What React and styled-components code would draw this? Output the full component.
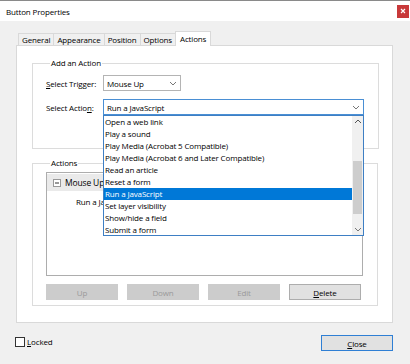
import React from 'react';
import styled, { createGlobalStyle } from 'styled-components';

const GlobalStyle = createGlobalStyle`
  html, body { margin: 0; padding: 0; }
  body {
    font-family: "Open Sans", "Noto Sans", sans-serif;
    font-size: 8px;
    letter-spacing: -0.15px;
    color: #000;
  }
`;

const Window = styled.div`
  width: 410px;
  height: 364px;
  display: flex;
  flex-direction: column;
  background: #f0f0f0;
  overflow: hidden;
  position: relative;
`;

const TitleBar = styled.div`
  height: 21px;
  background: #fff;
  border-top: 1px solid #8a8a8a;
  display: flex;
  align-items: center;
  justify-content: space-between;
  padding-left: 6px;
  padding-right: 1px;
  box-sizing: border-box;
`;

const CloseX = styled.div`
  flex-shrink: 0;
  width: 12px;
  height: 13px;
  background: #c8393a;
  display: flex;
  align-items: center;
  justify-content: center;
`;

const Body = styled.div`
  flex: 1;
  padding: 10px 17px 0 16px;
  display: flex;
  flex-direction: column;
`;

const TabStrip = styled.div`
  display: flex;
  align-items: flex-end;
  padding-left: 2px;
  height: 14px;
`;

const Tab = styled.div`
  height: ${p => (p.$active ? '15px' : '12px')};
  padding: 0 ${p => (p.$active ? '4px' : '3px')};
  background: ${p => (p.$active ? '#fff' : '#f0f0f0')};
  border: 1px solid #d9d9d9;
  border-bottom: none;
  margin-left: ${p => (p.$first ? '0' : '-1px')};
  display: flex;
  align-items: ${p => (p.$active ? 'flex-start' : 'center')};
  padding-top: ${p => (p.$active ? '1px' : '0')};
  box-sizing: border-box;
  position: relative;
  z-index: ${p => (p.$active ? 2 : 1)};
  margin-bottom: ${p => (p.$active ? '-1px' : '0')};
`;

const Panel = styled.div`
  height: 278px;
  background: #fff;
  border: 1px solid #d9d9d9;
  box-sizing: border-box;
  padding: 12px 14px 0 15px;
  display: flex;
  flex-direction: column;
`;

const Group = styled.fieldset`
  margin: 0;
  border: 1px solid #dcdcdc;
  padding: 0 14px 0 13px;
  height: ${p => p.$h}px;
  box-sizing: border-box;
  margin-bottom: ${p => p.$mb || 0}px;
  position: relative;
`;

const Legend = styled.legend`
  padding: 0 1px;
  margin-left: 4px;
  line-height: 10px;
`;

const FieldRow = styled.div`
  display: flex;
  align-items: center;
  height: 16px;
  margin-top: ${p => p.$mt}px;
`;

const Label = styled.div`
  width: 57px;
`;

const Combo = styled.div`
  width: ${p => p.$w}px;
  height: 16px;
  box-sizing: border-box;
  border: 1px solid ${p => (p.$focus ? '#4a8fd4' : '#b4b4b4')};
  background: #fff;
  display: flex;
  align-items: center;
  justify-content: space-between;
  padding: 0 3px 0 3px;
  position: relative;
`;

const Chevron = () => (
  <svg width="8" height="5" viewBox="0 0 8 5">
    <path d="M1 1 L4 4 L7 1" fill="none" stroke="#777" strokeWidth="1" />
  </svg>
);

const ChevronUp = () => (
  <svg width="8" height="5" viewBox="0 0 8 5">
    <path d="M1 4 L4 1 L7 4" fill="none" stroke="#555" strokeWidth="1" />
  </svg>
);

const DropList = styled.div`
  position: absolute;
  left: -1px;
  top: 15px;
  width: 261px;
  height: 121px;
  box-sizing: border-box;
  border: 1px solid #3e7fc4;
  background: #fff;
  z-index: 10;
  display: flex;
`;

const Items = styled.div`
  flex: 1;
`;

const Item = styled.div`
  height: 12px;
  line-height: 12px;
  padding-left: 1px;
  background: ${p => (p.$sel ? '#0078d7' : 'transparent')};
  color: ${p => (p.$sel ? '#fff' : '#000')};
  white-space: nowrap;
`;

const ScrollBar = styled.div`
  width: 11px;
  display: flex;
  flex-direction: column;
  align-items: center;
  background: #f0f0f0;
`;

const ScrollBtn = styled.div`
  height: 11px;
  display: flex;
  align-items: center;
  justify-content: center;
`;

const Track = styled.div`
  flex: 1;
  width: 100%;
  display: flex;
  flex-direction: column;
  padding-top: 34px;
  padding-bottom: 10px;
  box-sizing: border-box;
`;

const Thumb = styled.div`
  flex: 1;
  margin: 0 1px;
  background: #cdcdcd;
`;

const TreeBox = styled.div`
  margin-top: 4px;
  height: 104px;
  border: 1px solid #adadad;
  box-sizing: border-box;
  background: #fff;
  padding: 1px 0 0 0;
`;

const TreeHead = styled.div`
  height: 17px;
  background: #eaeaea;
  display: flex;
  align-items: center;
  padding-left: 6px;
  gap: 4px;
  font-size: 8.5px;
`;

const TreeChild = styled.div`
  padding-left: 29px;
  margin-top: 5px;
`;

const ButtonRow = styled.div`
  display: flex;
  gap: 9px;
  margin-top: 8px;
`;

const Btn = styled.div`
  width: 72px;
  height: 16px;
  box-sizing: border-box;
  display: flex;
  align-items: center;
  justify-content: center;
  background: ${p => (p.$disabled ? '#cccccc' : '#e1e1e1')};
  border: 1px solid ${p => (p.$disabled ? '#cccccc' : p.$default ? '#2f7fd4' : '#adadad')};
  color: ${p => (p.$disabled ? '#9a9a9a' : '#000')};
`;

const Footer = styled.div`
  display: flex;
  justify-content: space-between;
  align-items: flex-start;
  padding: 12px 0 0 0;
`;

const Check = styled.label`
  display: flex;
  align-items: center;
  gap: 2px;
  margin-top: 1px;
  margin-left: -1px;
`;

const Box = styled.span`
  width: 8px;
  height: 8px;
  border: 1px solid #333;
  background: #fff;
`;

const U = styled.span`
  text-decoration: underline;
`;

const items = [
  'Open a web link',
  'Play a sound',
  'Play Media (Acrobat 5 Compatible)',
  'Play Media (Acrobat 6 and Later Compatible)',
  'Read an article',
  'Reset a form',
  'Run a JavaScript',
  'Set layer visibility',
  'Show/hide a field',
  'Submit a form',
];

const App = () => {
  return (
    <Window>
      <GlobalStyle />
      <TitleBar>
        <span>Button Properties</span>
        <CloseX>
          <svg width="6" height="6" viewBox="0 0 6 6">
            <path d="M1 1 L5 5 M5 1 L1 5" stroke="#fff" strokeWidth="1.2" />
          </svg>
        </CloseX>
      </TitleBar>
      <Body>
        <TabStrip>
          <Tab $first>General</Tab>
          <Tab>Appearance</Tab>
          <Tab>Position</Tab>
          <Tab>Options</Tab>
          <Tab $active>Actions</Tab>
        </TabStrip>
        <Panel>
          <Group $h={91} $mb={9}>
            <Legend>Add an Action</Legend>
            <FieldRow $mt={7}>
              <Label><U>S</U>elect Trigger:</Label>
              <Combo $w={78}>
                <span>Mouse Up</span>
                <Chevron />
              </Combo>
            </FieldRow>
            <FieldRow $mt={8}>
              <Label>Select Actio<U>n</U>:</Label>
              <Combo $w={261} $focus>
                <span>Run a JavaScript</span>
                <Chevron />
                <DropList>
                  <Items>
                    {items.map(it => (
                      <Item key={it} $sel={it === 'Run a JavaScript'}>{it}</Item>
                    ))}
                  </Items>
                  <ScrollBar>
                    <ScrollBtn><ChevronUp /></ScrollBtn>
                    <Track><Thumb /></Track>
                    <ScrollBtn><Chevron /></ScrollBtn>
                  </ScrollBar>
                </DropList>
              </Combo>
            </FieldRow>
          </Group>
          <Group $h={148}>
            <Legend>Actions</Legend>
            <TreeBox>
              <TreeHead>
                <svg width="8" height="8" viewBox="0 0 8 8">
                  <rect x="0.5" y="0.5" width="7" height="7" fill="#fff" stroke="#999" />
                  <path d="M2 4 H6" stroke="#333" />
                </svg>
                <span>Mouse Up</span>
              </TreeHead>
              <TreeChild>Run a JavaScript</TreeChild>
            </TreeBox>
            <ButtonRow>
              <Btn $disabled>Up</Btn>
              <Btn $disabled>Down</Btn>
              <Btn $disabled>Edit</Btn>
              <Btn><span><U>D</U>elete</span></Btn>
            </ButtonRow>
          </Group>
        </Panel>
        <Footer>
          <Check>
            <Box />
            <span><U>L</U>ocked</span>
          </Check>
          <Btn $default><span><U>C</U>lose</span></Btn>
        </Footer>
      </Body>
    </Window>
  );
};

export default App;
